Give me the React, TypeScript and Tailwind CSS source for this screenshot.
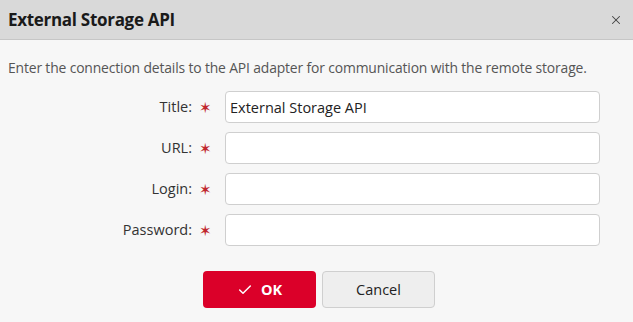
import { Check, X } from "lucide-react";

const fields = [
  { label: "Title:", value: "External Storage API" },
  { label: "URL:", value: "" },
  { label: "Login:", value: "" },
  { label: "Password:", value: "" },
];

export default function App() {
  return (
    <div
      className="w-[633px] h-[322px] bg-[#f7f7f7] flex flex-col text-[#333]"
      style={{ fontFamily: '"Open Sans", "Noto Sans", sans-serif' }}
    >
      {/* Header */}
      <div className="h-[40px] bg-[#d9d9d9] border-b border-[#c6c6c6] flex items-center justify-between pl-[8px] pr-[10px]">
        <h1 className="text-[17px] font-bold text-[#1a1a1a] tracking-[-0.3px]">External Storage API</h1>
        <X size={14} strokeWidth={1.8} className="text-[#444]" />
      </div>

      {/* Body */}
      <div className="flex flex-col px-[8px] pt-[19px]">
        <p className="text-[13.9px] text-[#555] tracking-[-0.15px] leading-[18px] whitespace-nowrap">
          Enter the connection details to the API adapter for communication with the remote storage.
        </p>

        <div className="flex flex-col gap-[9px] mt-[14px]">
          {fields.map((f) => (
            <div key={f.label} className="flex items-center">
              <div className="w-[217px] flex justify-end items-center pr-[13px] text-[14.5px] text-[#333]">
                <span>{f.label}</span>
                <span className="ml-[7px] text-[#c0272d] text-[15px]">✶</span>
              </div>
              <input
                defaultValue={f.value}
                className="w-[375px] h-[32px] bg-white border border-[#cfcfcf] rounded-[4px] px-[4px] text-[14.5px] text-[#222] outline-none"
              />
            </div>
          ))}
        </div>

        <div className="flex gap-[6px] mt-[25px] ml-[195px]">
          <button className="w-[113px] h-[37px] bg-[#db0029] rounded-[4px] text-white font-bold text-[14.5px] flex items-center justify-center gap-[8px]">
            <Check size={16} strokeWidth={2.2} />
            OK
          </button>
          <button className="w-[113px] h-[37px] bg-[#eeeeee] border border-[#cfcfcf] rounded-[4px] text-[#222] text-[14.5px] flex items-center justify-center">
            Cancel
          </button>
        </div>
      </div>
    </div>
  );
}
